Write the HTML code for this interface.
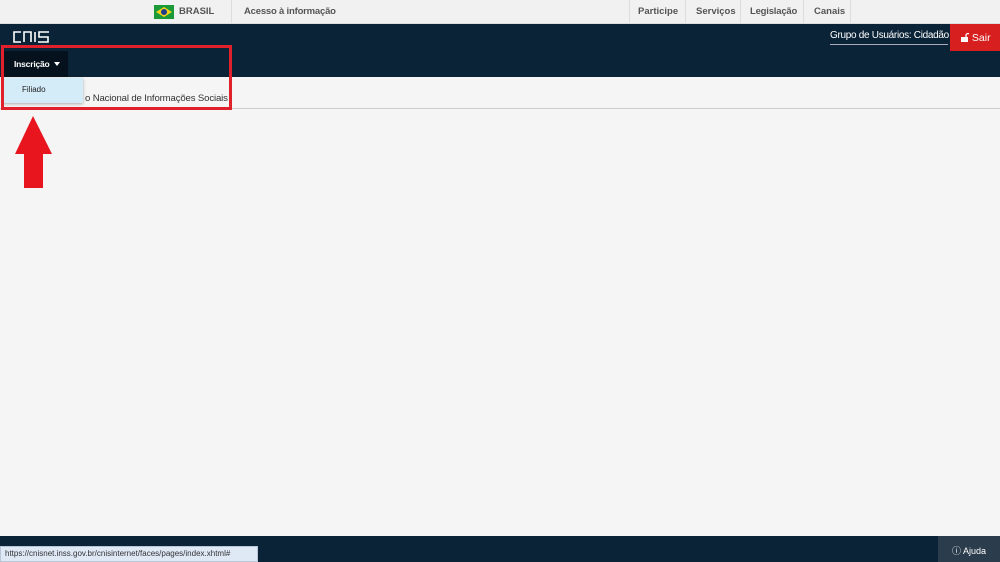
<!DOCTYPE html>
<html><head><meta charset="utf-8"><style>
*{margin:0;padding:0;box-sizing:border-box}
body{width:1000px;height:562px;overflow:hidden;background:#f5f5f5;font-family:"Liberation Sans",sans-serif;position:relative}
.top{position:absolute;left:0;top:0;width:1000px;height:24px;background:#f1f1f1;border-bottom:1px solid #ddd;font-size:9.5px;font-weight:bold;color:#555}
.top span{position:absolute;top:6px}
.sep{position:absolute;top:0;width:1px;height:24px;background:#ddd}
.hdr{position:absolute;left:0;top:24px;width:1000px;height:53px;background:#0b2336}
.abs{position:absolute}
</style></head><body>
<div class="top">
 <svg class="abs" style="left:154px;top:5px" width="20" height="14"><rect width="20" height="14" fill="#1c9a3a"/><polygon points="10,2 18,7 10,12 2,7" fill="#f4d21a"/><circle cx="10" cy="7" r="3" fill="#1f3d8a"/></svg>
 <span style="left:179px">BRASIL</span>
 <div class="sep" style="left:231px"></div>
 <span style="left:244px;letter-spacing:-0.2px">Acesso à informação</span>
 <div class="sep" style="left:629px"></div>
 <span style="left:638px">Participe</span>
 <div class="sep" style="left:685px"></div>
 <span style="left:696px">Serviços</span>
 <div class="sep" style="left:740px"></div>
 <span style="left:750px;letter-spacing:-0.2px">Legislação</span>
 <div class="sep" style="left:803px"></div>
 <span style="left:814px">Canais</span>
 <div class="sep" style="left:850px"></div>
</div>
<div class="hdr">
 <svg class="abs" style="left:13px;top:7px" width="38" height="12" fill="none" stroke="#fff" stroke-width="1.6"><path d="M8 1H1V11H8"/><path d="M11 11V1H18V11"/><path d="M22 1V11"/><path d="M36 1H26V6H35V11H25"/></svg>
 <div class="abs" style="left:830px;top:6px;font-size:10px;color:#fff;letter-spacing:-0.3px;white-space:nowrap">Grupo de Usuários: Cidadão</div>
 <div class="abs" style="left:830px;top:20px;width:118px;height:1px;background:#aab"></div>
 <div class="abs" style="left:950px;top:0;width:50px;height:27px;background:#d71f1f;color:#fff;font-size:10.5px;padding:8px 0 0 10px">
  <svg width="9" height="9" style="vertical-align:-1px"><path d="M1 4H8V9H1Z" fill="#fff"/><path d="M6 4V2.5A2 2 0 0 1 10 2.5" stroke="#fff" stroke-width="1.3" fill="none"/></svg> Sair</div>
 <div class="abs" style="left:3px;top:27px;width:65px;height:26px;background:#05111c;color:#fff;font-size:8.5px;font-weight:bold;padding:8px 0 0 11px;letter-spacing:-0.2px">Inscrição <span style="display:inline-block;border:3.5px solid transparent;border-top:4px solid #fff;border-bottom:0;vertical-align:1px;margin-left:2px"></span></div>
</div>
<div class="abs" style="left:85px;top:93px;font-size:9.6px;color:#333;letter-spacing:-0.15px;white-space:nowrap">o Nacional de Informações Sociais</div>
<div class="abs" style="left:0;top:108px;width:1000px;height:1px;background:#ccc"></div>
<div class="abs" style="left:3px;top:78px;width:80px;height:25px;background:#d4ebf8;box-shadow:0 1px 3px rgba(0,0,0,.3);font-size:8px;color:#222;padding:7px 0 0 19px">Filiado</div>
<div class="abs" style="left:1px;top:45px;width:231px;height:65px;border:3px solid #e0202a"></div>
<svg class="abs" style="left:14px;top:114px" width="40" height="76"><polygon points="19,2 38,40 29,40 29,74 10,74 10,40 1,40" fill="#e8151f"/></svg>
<div class="abs" style="left:0;top:536px;width:1000px;height:26px;background:#0b2336"></div>
<div class="abs" style="left:938px;top:536px;width:62px;height:26px;background:#2b3c4c;color:#fff;font-size:9px;padding:8px 0 0 14px">&#9432; Ajuda</div>
<div class="abs" style="left:0;top:546px;width:258px;height:16px;background:#dfe8f5;border:1px solid #b9c6d8;font-size:8px;color:#333;padding:2px 0 0 4px">https://cnisnet.inss.gov.br/cnisinternet/faces/pages/index.xhtml#</div>
</body></html>
